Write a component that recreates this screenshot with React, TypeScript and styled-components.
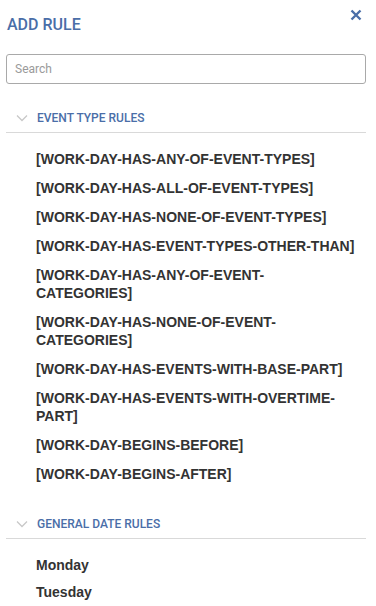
import styled, { createGlobalStyle } from 'styled-components';

const GlobalStyle = createGlobalStyle`
  body {
    margin: 0;
    background: #ffffff;
    font-family: "Liberation Sans", Arial, sans-serif;
  }
`;

const Panel = styled.div`
  width: 376px;
  padding: 0 10px 0 6px;
  box-sizing: border-box;
`;

const Header = styled.div`
  display: flex;
  justify-content: space-between;
  align-items: flex-start;
  padding: 14px 0 0 1px;
`;

const Title = styled.h2`
  margin: 0;
  font-family: "Roboto", sans-serif;
  font-size: 16px;
  line-height: 22px;
  font-weight: 500;
  color: #4a6ea8;
`;

const CloseButton = styled.button`
  display: flex;
  border: 0;
  padding: 0;
  margin: -5px 4px 0 0;
  background: none;
  cursor: pointer;
`;

const SearchInput = styled.input`
  display: block;
  width: 100%;
  height: 30px;
  margin-top: 18px;
  padding: 0 8px;
  box-sizing: border-box;
  border: 1px solid #a9a9a9;
  border-radius: 3px;
  font-family: "Roboto", sans-serif;
  font-size: 12px;
  color: #333;
  &::placeholder {
    color: #9a9a9a;
  }
`;

const Section = styled.section`
  margin-top: 26px;
`;

const SectionHeader = styled.div`
  display: flex;
  align-items: center;
  gap: 9px;
  padding: 0 0 6px 10px;
  border-bottom: 1px solid #d9d9d9;
`;

const SectionTitle = styled.span`
  font-family: "Roboto", sans-serif;
  font-size: 12px;
  line-height: 16px;
  font-weight: 500;
  color: #4a6ea8;
`;

const RuleList = styled.ul<{ $gap: number }>`
  list-style: none;
  margin: 0;
  padding: 17px 8px 7px 30px;
  display: flex;
  flex-direction: column;
  gap: ${(p) => p.$gap}px;
`;

const RuleItem = styled.li`
  font-size: 14px;
  line-height: 18px;
  font-weight: 700;
  color: #333333;
`;

const Chevron = () => (
  <svg width="12" height="8" viewBox="0 0 12 8">
    <path d="M1 1.5 L6 6.5 L11 1.5" fill="none" stroke="#c8c8c8" strokeWidth="1.3" />
  </svg>
);

const CloseIcon = () => (
  <svg width="12" height="12" viewBox="0 0 12 12">
    <path d="M1.5 1.5 L10.5 10.5 M10.5 1.5 L1.5 10.5" stroke="#4a6ea8" strokeWidth="2.4" strokeLinecap="butt" />
  </svg>
);

const eventRules = [
  '[WORK-DAY-HAS-ANY-OF-EVENT-TYPES]',
  '[WORK-DAY-HAS-ALL-OF-EVENT-TYPES]',
  '[WORK-DAY-HAS-NONE-OF-EVENT-TYPES]',
  '[WORK-DAY-HAS-EVENT-TYPES-OTHER-THAN]',
  '[WORK-DAY-HAS-ANY-OF-EVENT-CATEGORIES]',
  '[WORK-DAY-HAS-NONE-OF-EVENT-CATEGORIES]',
  '[WORK-DAY-HAS-EVENTS-WITH-BASE-PART]',
  '[WORK-DAY-HAS-EVENTS-WITH-OVERTIME-PART]',
  '[WORK-DAY-BEGINS-BEFORE]',
  '[WORK-DAY-BEGINS-AFTER]',
];

const dateRules = ['Monday', 'Tuesday'];

interface IRuleGroup {
  title: string;
  rules: string[];
  gap?: number;
}

const RuleGroup = ({ title, rules, gap = 11 }: IRuleGroup) => (
  <Section>
    <SectionHeader>
      <Chevron />
      <SectionTitle>{title}</SectionTitle>
    </SectionHeader>
    <RuleList $gap={gap}>
      {rules.map((rule) => (
        <RuleItem key={rule}>{rule}</RuleItem>
      ))}
    </RuleList>
  </Section>
);

export default function App() {
  return (
    <>
      <GlobalStyle />
      <Panel>
        <Header>
          <Title>ADD RULE</Title>
          <CloseButton aria-label="Close">
            <CloseIcon />
          </CloseButton>
        </Header>
        <SearchInput placeholder="Search" />
        <RuleGroup title="EVENT TYPE RULES" rules={eventRules} />
        <RuleGroup title="GENERAL DATE RULES" rules={dateRules} gap={9} />
      </Panel>
    </>
  );
}
